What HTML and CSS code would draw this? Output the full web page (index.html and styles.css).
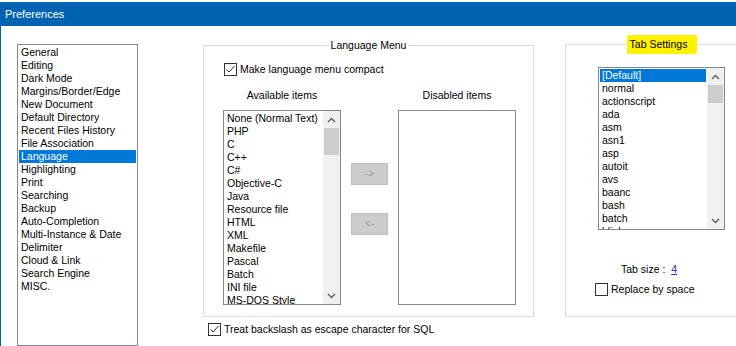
FILE: index.html
```html
<!DOCTYPE html>
<html>
<head>
<meta charset="utf-8">
<link rel="stylesheet" href="styles.css">
</head>
<body>
<div class="topstrip"></div>
<div class="window">
  <div class="titlebar">Preferences</div>
  <div class="client">
    <div class="listbox navlist">
      <div class="item">General</div>
      <div class="item">Editing</div>
      <div class="item">Dark Mode</div>
      <div class="item">Margins/Border/Edge</div>
      <div class="item">New Document</div>
      <div class="item">Default Directory</div>
      <div class="item">Recent Files History</div>
      <div class="item">File Association</div>
      <div class="item sel">Language</div>
      <div class="item">Highlighting</div>
      <div class="item">Print</div>
      <div class="item">Searching</div>
      <div class="item">Backup</div>
      <div class="item">Auto-Completion</div>
      <div class="item">Multi-Instance &amp; Date</div>
      <div class="item">Delimiter</div>
      <div class="item">Cloud &amp; Link</div>
      <div class="item">Search Engine</div>
      <div class="item">MISC.</div>
    </div>

    <div class="midcol">
      <fieldset class="group langgroup">
        <legend class="legend">Language Menu</legend>
        <div class="check compact">
          <span class="box"><svg width="11" height="11" viewBox="0 0 11 11"><polyline points="1.5,5.5 4,8 9.5,2" fill="none" stroke="#333" stroke-width="1"/></svg></span>
          <span>Make language menu compact</span>
        </div>
        <div class="transfer">
          <div class="col">
            <div class="collabel">Available items</div>
            <div class="listbox langlist">
              <div class="items">
                <div class="item">None (Normal Text)</div>
                <div class="item">PHP</div>
                <div class="item">C</div>
                <div class="item">C++</div>
                <div class="item">C#</div>
                <div class="item">Objective-C</div>
                <div class="item">Java</div>
                <div class="item">Resource file</div>
                <div class="item">HTML</div>
                <div class="item">XML</div>
                <div class="item">Makefile</div>
                <div class="item">Pascal</div>
                <div class="item">Batch</div>
                <div class="item">INI file</div>
                <div class="item">MS-DOS Style</div>
              </div>
              <div class="scrollbar">
                <div class="arrow"><svg width="9" height="6" viewBox="0 0 9 6"><polyline points="1,5 4.5,1.5 8,5" fill="none" stroke="#606060" stroke-width="1.4"/></svg></div>
                <div class="thumb lthumb"></div>
                <div class="track"></div>
                <div class="arrow"><svg width="9" height="6" viewBox="0 0 9 6"><polyline points="1,1 4.5,4.5 8,1" fill="none" stroke="#606060" stroke-width="1.4"/></svg></div>
              </div>
            </div>
          </div>
          <div class="btncol">
            <div class="btn">-&gt;</div>
            <div class="btn">&lt;-</div>
          </div>
          <div class="col">
            <div class="collabel">Disabled items</div>
            <div class="listbox emptylist"></div>
          </div>
        </div>
      </fieldset>
      <div class="check sqlcheck">
        <span class="box"><svg width="11" height="11" viewBox="0 0 11 11"><polyline points="1.5,5.5 4,8 9.5,2" fill="none" stroke="#333" stroke-width="1"/></svg></span>
        <span>Treat backslash as escape character for SQL</span>
      </div>
    </div>

    <fieldset class="group tabgroup">
      <legend class="legend hl">Tab Settings</legend>
      <div class="listbox tablist">
        <div class="items">
          <div class="item sel">[Default]</div>
          <div class="item">normal</div>
          <div class="item">actionscript</div>
          <div class="item">ada</div>
          <div class="item">asm</div>
          <div class="item">asn1</div>
          <div class="item">asp</div>
          <div class="item">autoit</div>
          <div class="item">avs</div>
          <div class="item">baanc</div>
          <div class="item">bash</div>
          <div class="item">batch</div>
          <div class="item">blink</div>
        </div>
        <div class="scrollbar">
          <div class="arrow"><svg width="9" height="6" viewBox="0 0 9 6"><polyline points="1,5 4.5,1.5 8,5" fill="none" stroke="#606060" stroke-width="1.4"/></svg></div>
          <div class="thumb tthumb"></div>
          <div class="track"></div>
          <div class="arrow"><svg width="9" height="6" viewBox="0 0 9 6"><polyline points="1,1 4.5,4.5 8,1" fill="none" stroke="#606060" stroke-width="1.4"/></svg></div>
        </div>
      </div>
      <div class="tabsize">Tab size :&nbsp; <span class="link">4</span></div>
      <div class="check replace">
        <span class="box"></span>
        <span>Replace by space</span>
      </div>
    </fieldset>
  </div>
</div>
</body>
</html>
```

FILE: styles.css
```css
* { box-sizing: border-box; }
html, body {
  margin: 0;
  padding: 0;
  background: #fff;
}
body {
  width: 736px;
  height: 346px;
  overflow: hidden;
  font-family: "Liberation Sans", Arial, sans-serif;
  font-size: 10.5px;
  color: #000;
}
.topstrip {
  height: 2px;
  background: #fff;
}
.window {
  border-left: 1px solid #0063b1;
  height: 344px;
}
.titlebar {
  height: 24px;
  background: #0063b1;
  color: #fff;
  font-size: 11px;
  line-height: 24px;
  padding-left: 5px;
  margin-left: -1px;
}
.client {
  display: flex;
  align-items: flex-start;
  padding: 18px 0 0 16px;
}
.listbox {
  border: 1px solid #828790;
  background: #fff;
  display: flex;
  flex: none;
}
.item {
  height: 13px;
  line-height: 13px;
  white-space: nowrap;
  padding-left: 2px;
}
.item.sel {
  background: #0078d7;
  color: #fff;
}
.navlist {
  width: 121px;
  height: 302px;
  flex-direction: column;
  padding: 1px;
}
.midcol {
  margin-left: 65px;
  display: flex;
  flex-direction: column;
  flex: none;
}
.group {
  margin: 0;
  padding: 0;
  min-width: 0;
  border: 1px solid #dcdcdc;
}
.legend {
  margin: 0 auto;
  padding: 0 2px;
  height: 16px;
  line-height: 16px;
}
.langgroup {
  width: 331px;
  height: 280px;
  margin-top: -7px;
  padding: 10px 0 0 0;
}
.check {
  display: flex;
  align-items: center;
  height: 13px;
  line-height: 13px;
  white-space: nowrap;
}
.box {
  width: 13px;
  height: 13px;
  border: 1px solid #333;
  background: #fff;
  margin-right: 3px;
  display: flex;
  align-items: center;
  justify-content: center;
  flex: none;
}
.compact {
  margin-left: 20px;
}
.transfer {
  display: flex;
  margin-left: 19px;
  margin-top: 11px;
}
.col {
  display: flex;
  flex-direction: column;
  width: 118px;
  flex: none;
}
.collabel {
  height: 16px;
  line-height: 16px;
  text-align: center;
  margin-bottom: 7px;
}
.langlist, .emptylist {
  height: 195px;
}
.items {
  flex: 1;
  padding: 1px;
  overflow: hidden;
}
.scrollbar {
  width: 17px;
  background: #f0f0f0;
  display: flex;
  flex-direction: column;
  flex: none;
}
.arrow {
  height: 17px;
  display: flex;
  align-items: center;
  justify-content: center;
  flex: none;
}
.thumb {
  background: #cdcdcd;
  margin: 0 1px;
  flex: none;
}
.lthumb { height: 27px; }
.tthumb { height: 18px; }
.track { flex: 1; }
.btncol {
  width: 37px;
  margin: 0 10px;
  padding-top: 76px;
  display: flex;
  flex-direction: column;
  gap: 28px;
  flex: none;
}
.btn {
  height: 22px;
  background: #cccccc;
  border: 1px solid #bfbfbf;
  color: #9a9a9a;
  text-align: center;
  line-height: 19px;
  font-size: 10px;
}
.sqlcheck {
  margin-top: 6px;
  margin-left: 5px;
}
.tabgroup {
  margin-left: 31px;
  margin-top: -9px;
  width: 194px;
  height: 282px;
  flex: none;
  padding: 13px 0 0 0;
}
.hl {
  height: 19px;
  line-height: 19px;
  padding: 0 10px 0 3px;
  background: #fff200;
  border-radius: 2px 1px 3px 1px;
}
.tablist {
  width: 127px;
  height: 163px;
  margin-left: 32px;
}
.tabsize {
  margin-top: 32px;
  margin-left: 55px;
  height: 14px;
  line-height: 14px;
}
.link {
  color: #2222dd;
  text-decoration: underline;
}
.replace {
  margin-top: 7px;
  margin-left: 29px;
}
```
